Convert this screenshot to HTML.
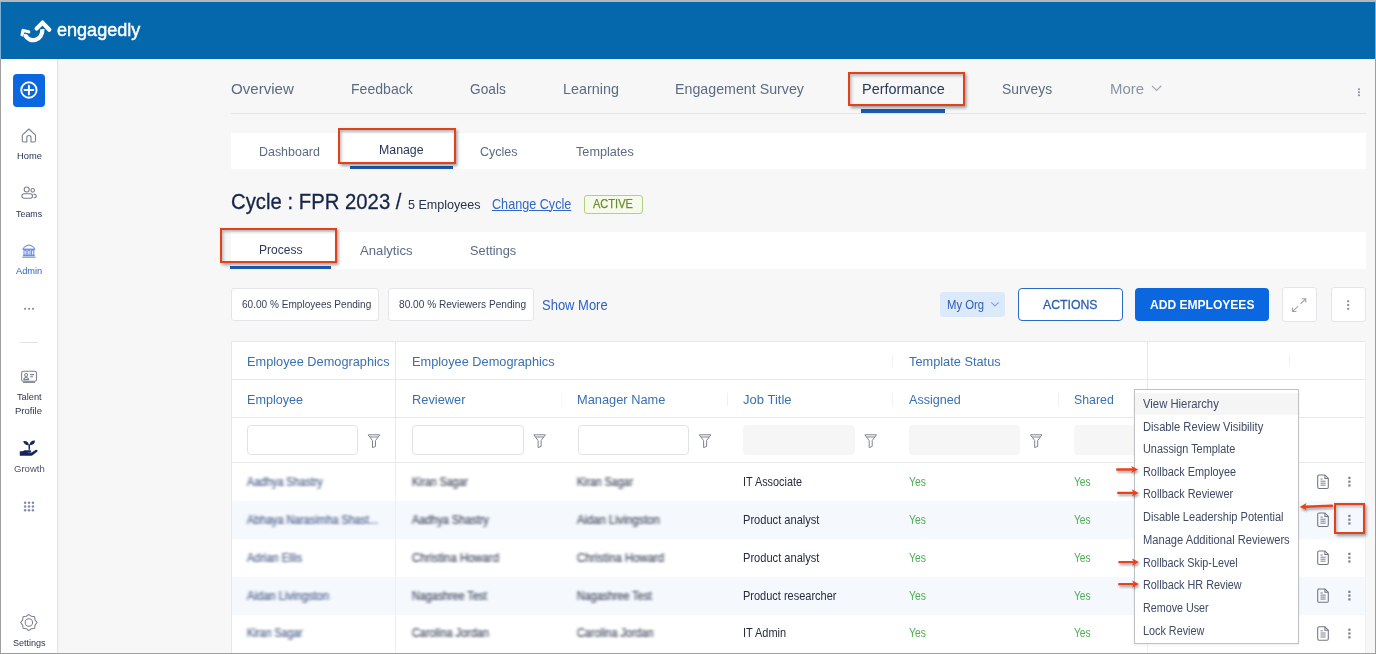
<!DOCTYPE html>
<html><head><meta charset="utf-8"><title>Engagedly</title>
<style>
html,body{margin:0;padding:0;}
body{width:1376px;height:654px;overflow:hidden;position:relative;background:#9f9f9f;font-family:"Liberation Sans",sans-serif;}
.b{position:absolute;box-sizing:border-box;}
.t{position:absolute;white-space:nowrap;transform-origin:0 50%;}
svg.ov{position:absolute;left:0;top:0;}
</style></head><body>
<div class="b" style="left:0px;top:0px;width:1376.00px;height:1.80px;background:#b2b8bc;"></div>
<div class="b" style="left:0px;top:1.8px;width:1376.00px;height:56.80px;background:#7ab2dc;"></div>
<div class="b" style="left:1.1px;top:1.8px;width:1373.70px;height:650.95px;background:#f7f7f7;"></div>
<div class="b" style="left:1.1px;top:1.8px;width:1373.70px;height:56.80px;background:#0668ac;"></div>
<div class="b" style="left:1.1px;top:58.6px;width:56.10px;height:594.15px;background:#fff;box-shadow:1px 0 1.5px rgba(0,0,0,0.10);"></div>
<div class="t" style="left:57.20px;top:17.20px;font-size:18.5px;line-height:26px;color:#fff;transform:scaleX(0.9757);-webkit-text-stroke:0.45px #fff;">engagedly</div>
<div class="b" style="left:12.5px;top:74px;width:32.80px;height:32.80px;background:#0b67e0;border-radius:4px;"></div>
<div class="t" style="left:16.50px;top:148.60px;font-size:9.8px;line-height:14px;color:#2a3552;transform:scaleX(0.9538);">Home</div>
<div class="t" style="left:15.90px;top:206.50px;font-size:9.8px;line-height:14px;color:#2a3552;transform:scaleX(0.9078);">Teams</div>
<div class="t" style="left:15.90px;top:263.80px;font-size:9.8px;line-height:14px;color:#2a5fc8;transform:scaleX(0.9448);">Admin</div>
<div class="t" style="left:16.60px;top:389.80px;font-size:9.8px;line-height:14px;color:#2a3552;transform:scaleX(0.9423);">Talent</div>
<div class="t" style="left:15.20px;top:404.00px;font-size:9.8px;line-height:14px;color:#2a3552;transform:scaleX(0.9701);">Profile</div>
<div class="t" style="left:13.80px;top:462.40px;font-size:9.8px;line-height:14px;color:#4a5470;transform:scaleX(0.9753);">Growth</div>
<div class="t" style="left:12.50px;top:636.00px;font-size:9.8px;line-height:14px;color:#2a3552;transform:scaleX(0.9220);">Settings</div>
<div class="b" style="left:19.6px;top:341.5px;width:18.40px;height:1.00px;background:#e3e3e3;"></div>
<div class="b" style="left:230.5px;top:112.7px;width:1135.50px;height:1.40px;background:#e3e4e6;"></div>
<div class="t" style="left:230.50px;top:78.25px;font-size:15px;line-height:21px;color:#5b6b85;transform:scaleX(1.0048);">Overview</div>
<div class="t" style="left:350.50px;top:78.25px;font-size:15px;line-height:21px;color:#5b6b85;transform:scaleX(0.9379);">Feedback</div>
<div class="t" style="left:469.50px;top:78.25px;font-size:15px;line-height:21px;color:#5b6b85;transform:scaleX(0.9150);">Goals</div>
<div class="t" style="left:562.80px;top:78.25px;font-size:15px;line-height:21px;color:#5b6b85;transform:scaleX(0.9576);">Learning</div>
<div class="t" style="left:675.40px;top:78.25px;font-size:15px;line-height:21px;color:#5b6b85;transform:scaleX(0.9487);">Engagement Survey</div>
<div class="t" style="left:861.80px;top:78.25px;font-size:15px;line-height:21px;color:#2a3859;transform:scaleX(0.9630);">Performance</div>
<div class="t" style="left:1001.90px;top:78.25px;font-size:15px;line-height:21px;color:#5b6b85;transform:scaleX(0.9256);">Surveys</div>
<div class="t" style="left:1109.60px;top:78.25px;font-size:15px;line-height:21px;color:#8a93a3;transform:scaleX(0.9963);">More</div>
<div class="b" style="left:861.3px;top:109.4px;width:83.30px;height:3.40px;background:#1b59b5;"></div>
<div class="b" style="left:230.5px;top:132.8px;width:1135.10px;height:36.20px;background:#fff;"></div>
<div class="t" style="left:259.30px;top:142.65px;font-size:13.2px;line-height:18px;color:#5b6b85;transform:scaleX(0.9434);">Dashboard</div>
<div class="t" style="left:378.60px;top:141.20px;font-size:13.2px;line-height:18px;color:#2a3859;transform:scaleX(0.9358);">Manage</div>
<div class="t" style="left:480.40px;top:142.65px;font-size:13.2px;line-height:18px;color:#5b6b85;transform:scaleX(0.9459);">Cycles</div>
<div class="t" style="left:575.50px;top:142.65px;font-size:13.2px;line-height:18px;color:#5b6b85;transform:scaleX(0.9607);">Templates</div>
<div class="b" style="left:349.8px;top:165.8px;width:102.80px;height:3.20px;background:#1b59b5;"></div>
<div class="t" style="left:230.60px;top:186.10px;font-size:21.8px;line-height:31px;color:#17244a;transform:scaleX(0.9320);-webkit-text-stroke:0.3px #17244a;">Cycle : FPR 2023 /</div>
<div class="t" style="left:407.90px;top:194.50px;font-size:13.4px;line-height:19px;color:#26324f;transform:scaleX(0.9383);">5 Employees</div>
<div class="t" style="left:492.00px;top:193.60px;font-size:14.3px;line-height:20px;color:#2f66c8;transform:scaleX(0.8827);text-decoration:underline;text-underline-offset:0.5px;text-decoration-thickness:1px;">Change Cycle</div>
<div class="b" style="left:583.8px;top:195px;width:59.20px;height:18.60px;background:#f6faeb;border:1px solid #b3cf83;border-radius:3px;"></div>
<div class="t" style="left:593.40px;top:195.30px;font-size:13px;line-height:18px;color:#6c8b30;transform:scaleX(0.8489);-webkit-text-stroke:0.25px #6c8b30;">ACTIVE</div>
<div class="b" style="left:230.5px;top:231.5px;width:1135.10px;height:37.50px;background:#fff;"></div>
<div class="t" style="left:258.50px;top:241.00px;font-size:13.2px;line-height:18px;color:#2b3a5c;transform:scaleX(0.9149);">Process</div>
<div class="t" style="left:359.90px;top:242.00px;font-size:13.2px;line-height:18px;color:#5b6b85;transform:scaleX(0.9962);">Analytics</div>
<div class="t" style="left:470.20px;top:242.00px;font-size:13.2px;line-height:18px;color:#5b6b85;transform:scaleX(0.9692);">Settings</div>
<div class="b" style="left:230.4px;top:266px;width:100.70px;height:3.00px;background:#1b59b5;"></div>
<div class="b" style="left:230.5px;top:287.6px;width:148.30px;height:33.00px;background:#fff;border:1px solid #e3e5e8;border-radius:3px;"></div>
<div class="b" style="left:387.5px;top:287.6px;width:146.10px;height:33.00px;background:#fff;border:1px solid #e3e5e8;border-radius:3px;"></div>
<div class="t" style="left:242.30px;top:297.20px;font-size:10.8px;line-height:15px;color:#333e57;transform:scaleX(0.9326);">60.00 % Employees Pending</div>
<div class="t" style="left:399.30px;top:297.20px;font-size:10.8px;line-height:15px;color:#333e57;transform:scaleX(0.9370);">80.00 % Reviewers Pending</div>
<div class="t" style="left:542.30px;top:295.10px;font-size:14.2px;line-height:20px;color:#2d62c6;transform:scaleX(0.9151);">Show More</div>
<div class="b" style="left:939.7px;top:292.3px;width:65.50px;height:24.30px;background:#dbe9fb;border-radius:3px;"></div>
<div class="t" style="left:946.60px;top:296.00px;font-size:12.8px;line-height:18px;color:#2d5fae;transform:scaleX(0.8838);">My Org</div>
<div class="b" style="left:1018.4px;top:288px;width:104.60px;height:32.70px;background:#fff;border:1.5px solid #2a68c9;border-radius:4px;"></div>
<div class="t" style="left:1043.00px;top:294.50px;font-size:13.6px;line-height:19px;color:#2a5db8;transform:scaleX(0.9025);-webkit-text-stroke:0.3px #2a5db8;">ACTIONS</div>
<div class="b" style="left:1135.4px;top:288px;width:133.80px;height:32.70px;background:#0b67e0;border-radius:4px;"></div>
<div class="t" style="left:1150.30px;top:294.70px;font-size:13.6px;line-height:19px;color:#fff;transform:scaleX(0.8863);font-weight:bold;">ADD EMPLOYEES</div>
<div class="b" style="left:1282.3px;top:287.3px;width:34.50px;height:34.50px;background:#fff;border:1px solid #e3e5e8;border-radius:3px;"></div>
<div class="b" style="left:1331px;top:287.3px;width:34.50px;height:34.50px;background:#fff;border:1px solid #e3e5e8;border-radius:3px;"></div>
<div class="b" style="left:230.5px;top:340.7px;width:1134.50px;height:312.10px;background:#fff;border-top:1px solid #e6e8eb;border-left:1px solid #e6e8eb;"></div>
<div class="b" style="left:231.5px;top:500.5px;width:1133.50px;height:38.00px;background:#f5f8fd;"></div>
<div class="b" style="left:231.5px;top:576.5px;width:1133.50px;height:38.00px;background:#f5f8fd;"></div>
<div class="b" style="left:230.5px;top:379.3px;width:1134.50px;height:1.00px;background:#e6e8eb;"></div>
<div class="b" style="left:230.5px;top:417.4px;width:1134.50px;height:1.00px;background:#e6e8eb;"></div>
<div class="b" style="left:230.5px;top:462px;width:1134.50px;height:1.00px;background:#e6e8eb;"></div>
<div class="b" style="left:395.4px;top:341px;width:1.00px;height:121.00px;background:#e6e8eb;"></div>
<div class="b" style="left:395.4px;top:462px;width:1.00px;height:190.80px;background:#eef0f3;"></div>
<div class="b" style="left:1147.3px;top:341px;width:1.00px;height:121.00px;background:#e6e8eb;"></div>
<div class="b" style="left:1147.3px;top:462px;width:1.00px;height:190.80px;background:#eef0f3;"></div>
<div class="b" style="left:1364.5px;top:341px;width:1.00px;height:311.80px;background:#eff0f2;"></div>
<div class="b" style="left:726.6500000000001px;top:392.5px;width:1.00px;height:13.00px;background:#eff0f2;"></div>
<div class="b" style="left:892.2px;top:392.5px;width:1.00px;height:13.00px;background:#eff0f2;"></div>
<div class="b" style="left:1057.75px;top:392.5px;width:1.00px;height:13.00px;background:#eff0f2;"></div>
<div class="b" style="left:561.1px;top:392.5px;width:1.00px;height:13.00px;background:#f4f5f7;"></div>
<div class="b" style="left:892.2px;top:354.5px;width:1.00px;height:12.50px;background:#eff0f2;"></div>
<div class="b" style="left:1288.7px;top:355px;width:1.00px;height:10.50px;background:#eff0f2;"></div>
<div class="t" style="left:246.70px;top:351.50px;font-size:13.6px;line-height:19px;color:#3871b1;transform:scaleX(0.9392);">Employee Demographics</div>
<div class="t" style="left:412.40px;top:351.50px;font-size:13.6px;line-height:19px;color:#3871b1;transform:scaleX(0.9392);">Employee Demographics</div>
<div class="t" style="left:908.60px;top:351.50px;font-size:13.6px;line-height:19px;color:#3871b1;transform:scaleX(0.9402);">Template Status</div>
<div class="t" style="left:246.50px;top:390.20px;font-size:13.6px;line-height:19px;color:#3871b1;transform:scaleX(0.9287);">Employee</div>
<div class="t" style="left:411.80px;top:390.20px;font-size:13.6px;line-height:19px;color:#3871b1;transform:scaleX(0.9427);">Reviewer</div>
<div class="t" style="left:577.40px;top:390.20px;font-size:13.6px;line-height:19px;color:#3871b1;transform:scaleX(0.9427);">Manager Name</div>
<div class="t" style="left:742.90px;top:390.20px;font-size:13.6px;line-height:19px;color:#3871b1;transform:scaleX(0.9596);">Job Title</div>
<div class="t" style="left:908.60px;top:390.20px;font-size:13.6px;line-height:19px;color:#3871b1;transform:scaleX(0.9268);">Assigned</div>
<div class="t" style="left:1074.30px;top:390.20px;font-size:13.6px;line-height:19px;color:#3871b1;transform:scaleX(0.9068);">Shared</div>
<div class="b" style="left:246.5px;top:425.4px;width:111.50px;height:29.20px;background:#fff;border:1px solid #dfe2e6;border-radius:4px;"></div>
<div class="b" style="left:412.05px;top:425.4px;width:111.50px;height:29.20px;background:#fff;border:1px solid #dfe2e6;border-radius:4px;"></div>
<div class="b" style="left:577.6px;top:425.4px;width:111.50px;height:29.20px;background:#fff;border:1px solid #dfe2e6;border-radius:4px;"></div>
<div class="b" style="left:743.1500000000001px;top:425.4px;width:111.50px;height:29.20px;background:#f6f6f7;border-radius:4px;"></div>
<div class="b" style="left:908.7px;top:425.4px;width:111.50px;height:29.20px;background:#f6f6f7;border-radius:4px;"></div>
<div class="b" style="left:1074.25px;top:425.4px;width:73.00px;height:29.20px;background:#f6f6f7;border-radius:4px;border-radius:4px 0 0 4px;"></div>
<div class="t" style="left:246.80px;top:472.60px;font-size:12.6px;line-height:18px;color:#4a5e88;transform:scaleX(0.8515);filter:url(#nb);-webkit-text-stroke:0.2px #4a5e88;">Aadhya Shastry</div>
<div class="t" style="left:411.80px;top:472.60px;font-size:12.6px;line-height:18px;color:#40485d;transform:scaleX(0.8405);filter:url(#nb);-webkit-text-stroke:0.2px #40485d;">Kiran Sagar</div>
<div class="t" style="left:577.40px;top:472.60px;font-size:12.6px;line-height:18px;color:#40485d;transform:scaleX(0.8420);filter:url(#nb);-webkit-text-stroke:0.2px #40485d;">Kiran Sagar</div>
<div class="t" style="left:743.20px;top:472.60px;font-size:12.6px;line-height:18px;color:#252c3f;transform:scaleX(0.8642);">IT Associate</div>
<div class="t" style="left:908.50px;top:472.60px;font-size:12.6px;line-height:18px;color:#4caf50;transform:scaleX(0.8194);">Yes</div>
<div class="t" style="left:1074.20px;top:472.60px;font-size:12.6px;line-height:18px;color:#4caf50;transform:scaleX(0.8097);">Yes</div>
<div class="t" style="left:246.80px;top:510.60px;font-size:12.6px;line-height:18px;color:#4a5e88;transform:scaleX(0.8540);filter:url(#nb);-webkit-text-stroke:0.2px #4a5e88;">Abhaya Narasimha Shast...</div>
<div class="t" style="left:411.80px;top:510.60px;font-size:12.6px;line-height:18px;color:#40485d;transform:scaleX(0.8639);filter:url(#nb);-webkit-text-stroke:0.2px #40485d;">Aadhya Shastry</div>
<div class="t" style="left:577.40px;top:510.60px;font-size:12.6px;line-height:18px;color:#40485d;transform:scaleX(0.8961);filter:url(#nb);-webkit-text-stroke:0.2px #40485d;">Aidan Livingston</div>
<div class="t" style="left:743.20px;top:510.60px;font-size:12.6px;line-height:18px;color:#252c3f;transform:scaleX(0.8805);">Product analyst</div>
<div class="t" style="left:908.50px;top:510.60px;font-size:12.6px;line-height:18px;color:#4caf50;transform:scaleX(0.8194);">Yes</div>
<div class="t" style="left:1074.20px;top:510.60px;font-size:12.6px;line-height:18px;color:#4caf50;transform:scaleX(0.8097);">Yes</div>
<div class="t" style="left:246.80px;top:548.60px;font-size:12.6px;line-height:18px;color:#4a5e88;transform:scaleX(0.8713);filter:url(#nb);-webkit-text-stroke:0.2px #4a5e88;">Adrian Ellis</div>
<div class="t" style="left:411.80px;top:548.60px;font-size:12.6px;line-height:18px;color:#40485d;transform:scaleX(0.9001);filter:url(#nb);-webkit-text-stroke:0.2px #40485d;">Christina Howard</div>
<div class="t" style="left:577.40px;top:548.60px;font-size:12.6px;line-height:18px;color:#40485d;transform:scaleX(0.9022);filter:url(#nb);-webkit-text-stroke:0.2px #40485d;">Christina Howard</div>
<div class="t" style="left:743.20px;top:548.60px;font-size:12.6px;line-height:18px;color:#252c3f;transform:scaleX(0.8805);">Product analyst</div>
<div class="t" style="left:908.50px;top:548.60px;font-size:12.6px;line-height:18px;color:#4caf50;transform:scaleX(0.8194);">Yes</div>
<div class="t" style="left:1074.20px;top:548.60px;font-size:12.6px;line-height:18px;color:#4caf50;transform:scaleX(0.8097);">Yes</div>
<div class="t" style="left:246.80px;top:586.50px;font-size:12.6px;line-height:18px;color:#4a5e88;transform:scaleX(0.8874);filter:url(#nb);-webkit-text-stroke:0.2px #4a5e88;">Aidan Livingston</div>
<div class="t" style="left:411.80px;top:586.50px;font-size:12.6px;line-height:18px;color:#40485d;transform:scaleX(0.8521);filter:url(#nb);-webkit-text-stroke:0.2px #40485d;">Nagashree Test</div>
<div class="t" style="left:577.40px;top:586.50px;font-size:12.6px;line-height:18px;color:#40485d;transform:scaleX(0.8499);filter:url(#nb);-webkit-text-stroke:0.2px #40485d;">Nagashree Test</div>
<div class="t" style="left:743.20px;top:586.50px;font-size:12.6px;line-height:18px;color:#252c3f;transform:scaleX(0.8726);">Product researcher</div>
<div class="t" style="left:908.50px;top:586.50px;font-size:12.6px;line-height:18px;color:#4caf50;transform:scaleX(0.8194);">Yes</div>
<div class="t" style="left:1074.20px;top:586.50px;font-size:12.6px;line-height:18px;color:#4caf50;transform:scaleX(0.8097);">Yes</div>
<div class="t" style="left:246.80px;top:624.40px;font-size:12.6px;line-height:18px;color:#4a5e88;transform:scaleX(0.8360);filter:url(#nb);-webkit-text-stroke:0.2px #4a5e88;">Kiran Sagar</div>
<div class="t" style="left:411.80px;top:624.40px;font-size:12.6px;line-height:18px;color:#40485d;transform:scaleX(0.8651);filter:url(#nb);-webkit-text-stroke:0.2px #40485d;">Carolina Jordan</div>
<div class="t" style="left:577.40px;top:624.40px;font-size:12.6px;line-height:18px;color:#40485d;transform:scaleX(0.8617);filter:url(#nb);-webkit-text-stroke:0.2px #40485d;">Carolina Jordan</div>
<div class="t" style="left:743.20px;top:624.40px;font-size:12.6px;line-height:18px;color:#252c3f;transform:scaleX(0.8725);">IT Admin</div>
<div class="t" style="left:908.50px;top:624.40px;font-size:12.6px;line-height:18px;color:#4caf50;transform:scaleX(0.8194);">Yes</div>
<div class="t" style="left:1074.20px;top:624.40px;font-size:12.6px;line-height:18px;color:#4caf50;transform:scaleX(0.8097);">Yes</div>
<div class="b" style="left:1134.2px;top:389.4px;width:164.40px;height:254.30px;background:#fff;border:1px solid #c0c2c7;box-shadow:0 1px 2px rgba(0,0,0,0.08);"></div>
<div class="b" style="left:1135.2px;top:393.4px;width:162.40px;height:22.00px;background:#f5f5f6;"></div>
<div class="t" style="left:1143.00px;top:396.10px;font-size:12.3px;line-height:17px;color:#3e4a66;transform:scaleX(0.9193);">View Hierarchy</div>
<div class="t" style="left:1143.00px;top:418.70px;font-size:12.3px;line-height:17px;color:#3e4a66;transform:scaleX(0.9084);">Disable Review Visibility</div>
<div class="t" style="left:1143.00px;top:441.40px;font-size:12.3px;line-height:17px;color:#3e4a66;transform:scaleX(0.8846);">Unassign Template</div>
<div class="t" style="left:1143.00px;top:463.90px;font-size:12.3px;line-height:17px;color:#3e4a66;transform:scaleX(0.8849);">Rollback Employee</div>
<div class="t" style="left:1143.00px;top:486.40px;font-size:12.3px;line-height:17px;color:#3e4a66;transform:scaleX(0.8848);">Rollback Reviewer</div>
<div class="t" style="left:1143.00px;top:509.40px;font-size:12.3px;line-height:17px;color:#3e4a66;transform:scaleX(0.8974);">Disable Leadership Potential</div>
<div class="t" style="left:1143.00px;top:532.20px;font-size:12.3px;line-height:17px;color:#3e4a66;transform:scaleX(0.9053);">Manage Additional Reviewers</div>
<div class="t" style="left:1143.00px;top:554.80px;font-size:12.3px;line-height:17px;color:#3e4a66;transform:scaleX(0.8771);">Rollback Skip-Level</div>
<div class="t" style="left:1143.00px;top:577.40px;font-size:12.3px;line-height:17px;color:#3e4a66;transform:scaleX(0.8805);">Rollback HR Review</div>
<div class="t" style="left:1143.00px;top:600.10px;font-size:12.3px;line-height:17px;color:#3e4a66;transform:scaleX(0.8735);">Remove User</div>
<div class="t" style="left:1143.00px;top:622.70px;font-size:12.3px;line-height:17px;color:#3e4a66;transform:scaleX(0.8790);">Lock Review</div>
<div class="b" style="left:847.9px;top:71.6px;width:117.50px;height:34.10px;border:2.6px solid #e0421b;box-shadow:1.5px 2px 3px rgba(0,0,0,0.38),inset 1.5px 2px 3px rgba(0,0,0,0.25);box-sizing:border-box;"></div>
<div class="b" style="left:338.1px;top:128.3px;width:118.00px;height:35.40px;border:2.6px solid #e0421b;box-shadow:1.5px 2px 3px rgba(0,0,0,0.38),inset 1.5px 2px 3px rgba(0,0,0,0.25);box-sizing:border-box;"></div>
<div class="b" style="left:219.7px;top:227.6px;width:117.40px;height:35.20px;border:2.6px solid #e0421b;box-shadow:1.5px 2px 3px rgba(0,0,0,0.38),inset 1.5px 2px 3px rgba(0,0,0,0.25);box-sizing:border-box;"></div>
<div class="b" style="left:1333.6px;top:503.3px;width:31.60px;height:30.70px;border:2.6px solid #e0421b;box-shadow:1.5px 2px 3px rgba(0,0,0,0.38),inset 1.5px 2px 3px rgba(0,0,0,0.25);box-sizing:border-box;"></div>
<svg class="ov" width="1376" height="654" viewBox="0 0 1376 654"><g fill="none" stroke="#fff" stroke-linecap="round" stroke-linejoin="round"><path d="M36.6 28.6 L42.5 22.6 L49.3 29.8" stroke-width="4.2"/><path d="M42.4 29.2 A9.3 10.5 0 0 1 25.1 35" stroke-width="4.3" stroke-linecap="butt"/><circle cx="25.1" cy="35" r="1.2" fill="#fff" stroke="none"/><path d="M28.8 31.8 L23 30.5 L22.1 34.8" stroke-width="3.2"/></g><g fill="none" stroke="#fff" stroke-width="1.9" stroke-linecap="round"><circle cx="28.9" cy="90" r="7.7"/><path d="M28.9 85.6V94.4M24.5 90H33.3"/></g><path d="M22.3 135.2 L28.9 129 L35.5 135.2 V140.6 a1.4 1.4 0 0 1 -1.4 1.4 H31 V137.6 a2.1 2.1 0 0 0 -4.2 0 V142 H23.7 a1.4 1.4 0 0 1 -1.4 -1.4 Z" fill="none" stroke="#7b8090" stroke-width="1.1" stroke-linejoin="round"/><g fill="none" stroke="#7b8090" stroke-width="1.1"><circle cx="26.7" cy="189.5" r="2.5"/><circle cx="32.7" cy="190.3" r="1.8"/><rect x="21.9" y="193.8" width="10.6" height="4.4" rx="2.2"/><path d="M33.5 194.4 H34.6 a1.7 1.7 0 0 1 0 3.4 H33.6"/></g><g fill="none" stroke="#6a8fe0" stroke-width="1.05" stroke-linejoin="round"><path d="M23.2 249.2 Q23.6 246.4 28.9 245 Q34.2 246.4 34.6 249.2 Z"/><path d="M22.6 249.3 H35.2"/><rect x="24" y="250.3" width="2.2" height="4.6"/><rect x="27.8" y="250.3" width="2.2" height="4.6"/><rect x="31.6" y="250.3" width="2.2" height="4.6"/><path d="M23 255.6 H34.8 M22.2 257.3 H35.6"/></g><g fill="#8d92a0"><circle cx="25.1" cy="308.8" r="1.1"/><circle cx="29.1" cy="308.8" r="1.1"/><circle cx="33" cy="308.8" r="1.1"/></g><g fill="none" stroke="#7b8090" stroke-width="1.05"><rect x="21.6" y="371.2" width="14.9" height="10" rx="1.8"/><circle cx="26.2" cy="375" r="1.5"/><path d="M23.8 379.6 a2.4 2.2 0 0 1 4.8 0 Z M30.2 374.6 H34 M30.2 376.8 H33"/><path d="M23 382.3 H35" stroke-width="1.2"/></g><g fill="#14265c" stroke="none"><path d="M23.3 441 C26.5 440.6 28.8 442.2 28.9 445.2 C25.6 445.4 23.6 443.8 23.3 441 Z"/><path d="M35 440.6 C35 443.6 33 445.3 29.6 445.2 C29.6 442.2 31.6 440.4 35 440.6 Z"/><rect x="28.5" y="444.5" width="1.5" height="5.2"/><path d="M19.8 451.3 H22.6 L24.6 450.2 H30.2 a1 1 0 0 1 0 2 H27.6 L27.6 452.6 H31.6 L36 449.8 a1.1 1.1 0 0 1 1.3 1.7 L32.6 455.2 a2 2 0 0 1 -1.2 .5 H19.8 Z"/></g><g fill="#7f8cad"><circle cx="25.1" cy="502.7" r="1.25"/><circle cx="25.1" cy="506.5" r="1.25"/><circle cx="25.1" cy="510.3" r="1.25"/><circle cx="29.0" cy="502.7" r="1.25"/><circle cx="29.0" cy="506.5" r="1.25"/><circle cx="29.0" cy="510.3" r="1.25"/><circle cx="32.9" cy="502.7" r="1.25"/><circle cx="32.9" cy="506.5" r="1.25"/><circle cx="32.9" cy="510.3" r="1.25"/></g><g fill="none" stroke="#7b8090" stroke-width="1.05" stroke-linejoin="round"><path d="M28.85 614.30 L31.41 616.31 L34.65 616.70 L35.04 619.94 L37.05 622.50 L35.04 625.06 L34.65 628.30 L31.41 628.69 L28.85 630.70 L26.29 628.69 L23.05 628.30 L22.66 625.06 L20.65 622.50 L22.66 619.94 L23.05 616.70 L26.29 616.31 Z"/><circle cx="28.85" cy="622.5" r="3.7"/></g><path d="M1152 85.8 L1156.6 90.4 L1161.3 85.8" fill="none" stroke="#a2a6ad" stroke-width="1.2"/><g fill="#7d838f"><rect x="1358.1" y="88.4" width="1.7" height="1.7"/><rect x="1358.1" y="91.4" width="1.7" height="1.7"/><rect x="1358.1" y="94.4" width="1.7" height="1.7"/></g><path d="M991.2 302.4 L994.9 306 L998.6 302.4" fill="none" stroke="#7fa2da" stroke-width="1.1"/><g fill="none" stroke="#9aa0a9" stroke-width="1.05"><path d="M1300.5 303.8 L1305.6 299 M1302 298.8 H1305.8 V302.6"/><path d="M1298 306.3 L1292.8 311.2 M1292.6 307.4 V311.4 H1296.4"/></g><g fill="#8a8f99"><rect x="1347.2" y="300.2" width="2" height="2"/><rect x="1347.2" y="304" width="2" height="2"/><rect x="1347.2" y="307.8" width="2" height="2"/></g><g fill="none" stroke="#7f8493" stroke-width="1.0" stroke-linejoin="round"><path d="M368.2 434.8 H379.8 L375.5 440.6 V446.4 L372.5 447.6 V440.6 Z"/><path d="M370 437 H378"/></g><g fill="none" stroke="#7f8493" stroke-width="1.0" stroke-linejoin="round"><path d="M533.8000000000001 434.8 H545.4 L541.1 440.6 V446.4 L538.1 447.6 V440.6 Z"/><path d="M535.6 437 H543.6"/></g><g fill="none" stroke="#7f8493" stroke-width="1.0" stroke-linejoin="round"><path d="M699.3000000000001 434.8 H710.9 L706.6 440.6 V446.4 L703.6 447.6 V440.6 Z"/><path d="M701.1 437 H709.1"/></g><g fill="none" stroke="#7f8493" stroke-width="1.0" stroke-linejoin="round"><path d="M864.9000000000001 434.8 H876.5 L872.2 440.6 V446.4 L869.2 447.6 V440.6 Z"/><path d="M866.7 437 H874.7"/></g><g fill="none" stroke="#7f8493" stroke-width="1.0" stroke-linejoin="round"><path d="M1030.4 434.8 H1042.0 L1037.7 440.6 V446.4 L1034.7 447.6 V440.6 Z"/><path d="M1032.2 437 H1040.2"/></g><g fill="none" stroke="#6f7582" stroke-width="1.05" stroke-linejoin="round"><path d="M1319.1000000000001 475.0 H1324.9 L1328.3 478.4 V487.0 a1.4 1.4 0 0 1 -1.4 1.4 H1319.1000000000001 a1.4 1.4 0 0 1 -1.4 -1.4 V476.4 a1.4 1.4 0 0 1 1.4 -1.4 Z"/><path d="M1324.9 475.0 V478.4 H1328.3" /><path d="M1320.5 479.0 H1322.7 M1320.5 481.2 H1325.6000000000001 M1320.5 483.2 H1325.6000000000001 M1320.5 485.2 H1325.6000000000001" stroke-width="0.9"/></g><g fill="#7a7f8a"><rect x="1348.3" y="476.8" width="2.2" height="2.2"/><rect x="1348.3" y="480.6" width="2.2" height="2.2"/><rect x="1348.3" y="484.4" width="2.2" height="2.2"/></g><g fill="none" stroke="#6f7582" stroke-width="1.05" stroke-linejoin="round"><path d="M1319.1000000000001 513.0 H1324.9 L1328.3 516.4 V525.0 a1.4 1.4 0 0 1 -1.4 1.4 H1319.1000000000001 a1.4 1.4 0 0 1 -1.4 -1.4 V514.4 a1.4 1.4 0 0 1 1.4 -1.4 Z"/><path d="M1324.9 513.0 V516.4 H1328.3" /><path d="M1320.5 517.0 H1322.7 M1320.5 519.2 H1325.6000000000001 M1320.5 521.2 H1325.6000000000001 M1320.5 523.2 H1325.6000000000001" stroke-width="0.9"/></g><g fill="#7a7f8a"><rect x="1348.3" y="514.8" width="2.2" height="2.2"/><rect x="1348.3" y="518.6" width="2.2" height="2.2"/><rect x="1348.3" y="522.4" width="2.2" height="2.2"/></g><g fill="none" stroke="#6f7582" stroke-width="1.05" stroke-linejoin="round"><path d="M1319.1000000000001 551.0 H1324.9 L1328.3 554.4 V563.0 a1.4 1.4 0 0 1 -1.4 1.4 H1319.1000000000001 a1.4 1.4 0 0 1 -1.4 -1.4 V552.4 a1.4 1.4 0 0 1 1.4 -1.4 Z"/><path d="M1324.9 551.0 V554.4 H1328.3" /><path d="M1320.5 555.0 H1322.7 M1320.5 557.2 H1325.6000000000001 M1320.5 559.2 H1325.6000000000001 M1320.5 561.2 H1325.6000000000001" stroke-width="0.9"/></g><g fill="#7a7f8a"><rect x="1348.3" y="552.8" width="2.2" height="2.2"/><rect x="1348.3" y="556.6" width="2.2" height="2.2"/><rect x="1348.3" y="560.4" width="2.2" height="2.2"/></g><g fill="none" stroke="#6f7582" stroke-width="1.05" stroke-linejoin="round"><path d="M1319.1000000000001 588.9 H1324.9 L1328.3 592.3 V600.9 a1.4 1.4 0 0 1 -1.4 1.4 H1319.1000000000001 a1.4 1.4 0 0 1 -1.4 -1.4 V590.3 a1.4 1.4 0 0 1 1.4 -1.4 Z"/><path d="M1324.9 588.9 V592.3 H1328.3" /><path d="M1320.5 592.9 H1322.7 M1320.5 595.1 H1325.6000000000001 M1320.5 597.1 H1325.6000000000001 M1320.5 599.1 H1325.6000000000001" stroke-width="0.9"/></g><g fill="#7a7f8a"><rect x="1348.3" y="590.7" width="2.2" height="2.2"/><rect x="1348.3" y="594.5" width="2.2" height="2.2"/><rect x="1348.3" y="598.3" width="2.2" height="2.2"/></g><g fill="none" stroke="#6f7582" stroke-width="1.05" stroke-linejoin="round"><path d="M1319.1000000000001 626.8 H1324.9 L1328.3 630.1999999999999 V638.8 a1.4 1.4 0 0 1 -1.4 1.4 H1319.1000000000001 a1.4 1.4 0 0 1 -1.4 -1.4 V628.1999999999999 a1.4 1.4 0 0 1 1.4 -1.4 Z"/><path d="M1324.9 626.8 V630.1999999999999 H1328.3" /><path d="M1320.5 630.8 H1322.7 M1320.5 633.0 H1325.6000000000001 M1320.5 635.0 H1325.6000000000001 M1320.5 637.0 H1325.6000000000001" stroke-width="0.9"/></g><g fill="#7a7f8a"><rect x="1348.3" y="628.6" width="2.2" height="2.2"/><rect x="1348.3" y="632.4" width="2.2" height="2.2"/><rect x="1348.3" y="636.2" width="2.2" height="2.2"/></g></svg>
<svg class="ov" width="1376" height="654" viewBox="0 0 1376 654"><defs><filter id="nb" x="-10%" y="-50%" width="120%" height="200%"><feGaussianBlur stdDeviation="2.0 1.3"/></filter><filter id="sh" x="-20%" y="-100%" width="140%" height="400%"><feDropShadow dx="1" dy="2" stdDeviation="1.2" flood-color="#000" flood-opacity="0.35"/></filter></defs><g filter="url(#sh)"><path d="M1117.3 469.5 L1132.2 469.5" stroke="#e8431a" stroke-width="2.4" stroke-linecap="round" fill="none"/><path d="M1138.2 469.5 L1131.2 473.1 L1132.8 469.5 L1131.2 465.9 Z" fill="#e8431a"/><path d="M1118.3 492.9 L1132.8 492.9" stroke="#e8431a" stroke-width="2.4" stroke-linecap="round" fill="none"/><path d="M1138.8 492.9 L1131.8 496.5 L1133.4 492.9 L1131.8 489.3 Z" fill="#e8431a"/><path d="M1119.4 562.1 L1133.0 562.1" stroke="#e8431a" stroke-width="2.4" stroke-linecap="round" fill="none"/><path d="M1139.0 562.1 L1132.0 565.7 L1133.6 562.1 L1132.0 558.5 Z" fill="#e8431a"/><path d="M1119.2 584.1 L1133.0 584.1" stroke="#e8431a" stroke-width="2.4" stroke-linecap="round" fill="none"/><path d="M1139.0 584.1 L1132.0 587.7 L1133.6 584.1 L1132.0 580.5 Z" fill="#e8431a"/><path d="M1332.0 505.8 L1305.6 506.8" stroke="#e8431a" stroke-width="2.4" stroke-linecap="round" fill="none"/><path d="M1299.6 507.0 L1306.5 503.1 L1305.0 506.8 L1306.7 510.3 Z" fill="#e8431a"/></g></svg>
</body></html>
